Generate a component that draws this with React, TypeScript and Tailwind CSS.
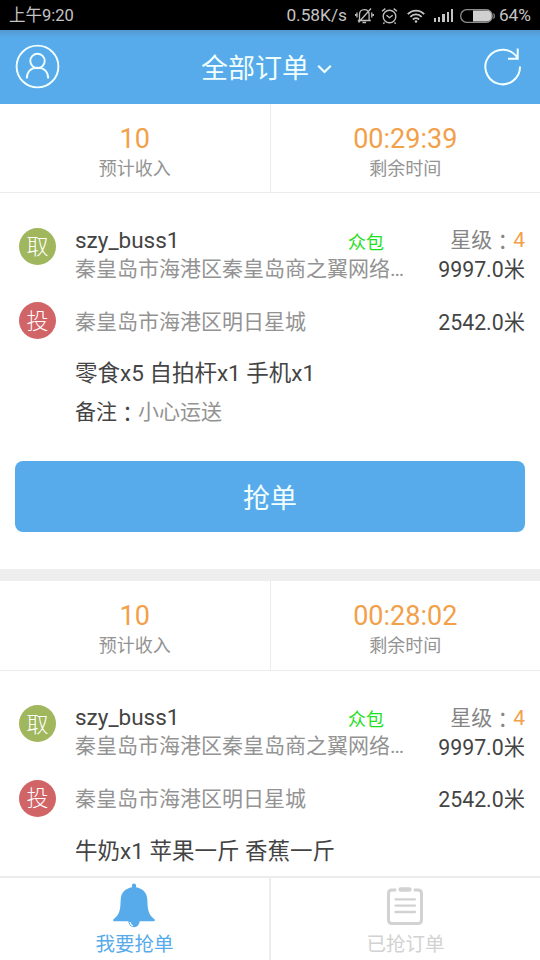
import React from 'react'
import clsx from 'clsx'

type Order = {
    id: number
    income: string
    timeLeft: string
    shop: string
    star: number
    from: string
    fromDistance: string
    to: string
    toDistance: string
    goods: string
    remark?: string
}

const orders: Order[] = [
    {
        id: 1,
        income: '10',
        timeLeft: '00:29:39',
        shop: 'szy_buss1',
        star: 4,
        from: '秦皇岛市海港区秦皇岛商之翼网络…',
        fromDistance: '9997.0米',
        to: '秦皇岛市海港区明日星城',
        toDistance: '2542.0米',
        goods: '零食x5 自拍杆x1 手机x1',
        remark: '小心运送',
    },
    {
        id: 2,
        income: '10',
        timeLeft: '00:28:02',
        shop: 'szy_buss1',
        star: 4,
        from: '秦皇岛市海港区秦皇岛商之翼网络…',
        fromDistance: '9997.0米',
        to: '秦皇岛市海港区明日星城',
        toDistance: '2542.0米',
        goods: '牛奶x1 苹果一斤 香蕉一斤',
    },
]

// full-width colon, centred in its cell
const Colon: React.FC = () => <span className="relative top-[2px] font-['Noto_Sans_CJK_TC',sans-serif]" lang="zh-TW">：</span>

const StatusBar: React.FC = () => (
    <div className="flex h-[30px] shrink-0 items-center bg-black pl-[9px] pr-[9px] pt-px text-[16.5px] leading-[29px] text-[#c4c4c4]">
        <span>上午9:20</span>
        <span className="ml-auto text-[17.3px]">0.58K/s</span>
        <svg className="ml-[8px] shrink-0" width="19" height="18" viewBox="0 0 19 18" fill="none" stroke="#bdbdbd" strokeWidth="1.3">
            <path d="M4.5 13.2V7.5C4.5 4.5 6.3 2.6 9.2 2.6s4.9 1.9 4.9 4.9v5.7M2.8 13.5h13M7.5 15.5h3.6M16 1.5 3.5 15.5M2 5.5v5M.6 7v2M16.8 5.5v5M18.3 7v2" />
        </svg>
        <svg className="ml-[7px] shrink-0" width="17" height="18" viewBox="0 0 17 18" fill="none" stroke="#bdbdbd" strokeWidth="1.4">
            <circle cx="8.5" cy="9.5" r="6.3" />
            <path d="M5.5 8.2 8.5 10.7 11.7 8.2M1 4.3 4.3 1.6M12.7 1.6 16 4.3M3.5 15.5 2.3 16.8M13.5 15.5l1.2 1.3" />
        </svg>
        <svg className="ml-[9px] shrink-0" width="18" height="14" viewBox="0 0 18 14" fill="none" stroke="#c4c4c4" strokeWidth="1.8">
            <path d="M.8 5.2C5.3.3 12.7.3 17.2 5.2M3.3 7.9c3.1-3.3 8.3-3.3 11.4 0M5.9 10.5c1.7-1.7 4.5-1.7 6.2 0" />
            <circle cx="9" cy="12.5" r="1.3" fill="#c4c4c4" stroke="none" />
        </svg>
        <div className="ml-[9px] flex h-[13px] items-end gap-[2px]">
            <i className="h-[4px] w-[2.2px] bg-[#c4c4c4]" />
            <i className="h-[5px] w-[2.2px] bg-[#c4c4c4]" />
            <i className="h-[8px] w-[2.2px] bg-[#c4c4c4]" />
            <i className="h-[10px] w-[2.2px] bg-[#c4c4c4]" />
            <i className="h-[13px] w-[2.2px] bg-[#c4c4c4]" />
        </div>
        <svg className="ml-[7px] mr-[1px] shrink-0" width="35" height="14" viewBox="0 0 35 14">
            <rect x=".7" y=".7" width="31.5" height="12.6" rx="6" fill="none" stroke="#8c8c8c" strokeWidth="1.3" />
            <path d="M13 1.6h13.5c3 0 5.2 2 5.2 5.4s-2.2 5.4-5.2 5.4H13z" fill="#d0d0d0" />
            <path d="M33.5 4.5c1 1.5 1 3.5 0 5" stroke="#8c8c8c" strokeWidth="1.3" fill="none" />
        </svg>
        <span className="ml-[3px] text-[17.3px]">64%</span>
    </div>
)

const Header: React.FC = () => (
    <header className="flex h-[73.5px] shrink-0 items-center justify-between bg-[#57abea] bg-[linear-gradient(#5499d0,#57abea_8px)] pl-[15px] pr-[17px] text-[#f2ffff]">
        <svg width="45" height="45" viewBox="0 0 45 45" fill="none" stroke="currentColor" strokeWidth="1.9">
            <circle cx="22.5" cy="22.5" r="20.9" />
            <circle cx="22.5" cy="17" r="7.2" />
            <path d="M11.8 34.5c0-6.5 4-10.8 10.7-10.8s10.7 4.3 10.7 10.8" />
        </svg>
        <button className="mr-[10px] mt-[4px] flex items-center text-[27px] leading-[36px]">
            全部订单
            <svg className="ml-[8px] mt-[2px]" width="15" height="11" viewBox="0 0 15 11" fill="none" stroke="currentColor" strokeWidth="2.2">
                <path d="M1.2 1.8 7.5 8 13.8 1.8" />
            </svg>
        </button>
        <svg width="40" height="40" viewBox="0 0 40 40" fill="none" stroke="currentColor" strokeWidth="2">
            <path d="M37 19.5A17.3 17.3 0 1 1 34.5 11M34.7 1.5v10.2H25" />
        </svg>
    </header>
)

const Stat: React.FC<{ value: string; label: string; first?: boolean }> = ({ value, label, first }) => (
    <div className={clsx('flex flex-1 flex-col items-center pt-[19px]', first && 'border-r border-[#ececec]')}>
        <span className="text-[27px] leading-[32px] text-[#f2a049]">{value}</span>
        <span className="mt-[1px] text-[18px] leading-[26px] text-[#939393]">{label}</span>
    </div>
)

const Badge: React.FC<{ text: string; className: string }> = ({ text, className }) => (
    <span className={clsx('flex size-[37px] shrink-0 items-center justify-center rounded-full pt-[2px] text-[22px] leading-none font-light text-white', className)}>
        {text}
    </span>
)

const OrderCard: React.FC<{ order: Order }> = ({ order }) => (
    <section className="flex h-[465.5px] shrink-0 flex-col bg-white text-[21px] leading-[29px] text-[#444]">
        <div className="flex h-[89.5px] shrink-0 border-b border-[#ececec]">
            <Stat value={order.income} label="预计收入" first />
            <Stat value={order.timeLeft} label="剩余时间" />
        </div>
        <div className="flex pl-[19px] pr-[15px] pt-[32px]">
            <Badge text="取" className="mt-[2.5px] bg-[#a0b75d]" />
            <div className="ml-[19px] w-[330px] pt-[0.5px]">
                <div className="flex items-center justify-between pr-[21px]">
                    <span className="text-[22.5px]">{order.shop}</span>
                    <span className="mt-[5px] text-[18px] leading-[24px] text-[#1ee01e]">众包</span>
                </div>
                <p className="whitespace-nowrap text-[#939393]">{order.from}</p>
            </div>
            <div className="ml-auto text-right">
                <p className="-mt-px text-[#858585]">星级<Colon /><span className="text-[#f2a049]">{order.star}</span></p>
                <p className="text-[21.3px]">{order.fromDistance}</p>
            </div>
        </div>
        <div className="mt-[18px] flex items-center pl-[19px] pr-[15px]">
            <Badge text="投" className="bg-[#d16466]" />
            <p className="ml-[19px] mt-[3px] text-[#939393]">{order.to}</p>
            <p className="ml-auto mt-[3px] text-[21.3px]">{order.toDistance}</p>
        </div>
        <div className="pl-[75px]">
            <p className="mt-[20px] text-[22.5px]">{order.goods}</p>
            {order.remark && (
                <p className="mt-[8px]">备注<Colon /><span className="text-[#939393]">{order.remark}</span></p>
            )}
        </div>
        <button className="mx-[15px] mb-[37px] mt-auto flex h-[71.5px] shrink-0 items-center justify-center rounded-[8px] bg-[#57abea] pt-[7px] text-[27px] text-[#f2ffff]">
            抢单
        </button>
    </section>
)

const TabBar: React.FC = () => (
    <nav className="flex h-[84px] shrink-0 border-t-2 border-[#ececec] bg-white text-[19.5px] leading-[26px]">
        <button className="flex flex-1 flex-col items-center border-r-2 border-[#ececec] pt-[5px] text-[#57abea]">
            <svg className="mr-[2px] shrink-0" width="42" height="46" viewBox="0 0 42 46">
                <path d="M21 .5c1.3 0 2 .9 2 2v1.7c6.500 1.200 10.900 5.300 11.200 11.300l.5 8c.5 5.500 2.300 9.500 6.500 12.500 1.100 1 .7 2.200-.7 2.200H1.500c-1.400 0-1.800-1.200-.7-2.200 4.200-3 6-7 6.500-12.500l.5-8C8.100 9.500 12.500 5.400 19 4.200V2.500c0-1.100.7-2 2-2z" fill="#57abea" />
                <path d="M15.300 38h11.400a5.700 6.200 0 0 1-11.400 0z" fill="#57abea" />
                <path d="M17 39c.3 2.200 1.300 3.400 3 4" fill="none" stroke="#fff" strokeWidth="1.2" />
            </svg>
            <span className="mt-[3px]">我要抢单</span>
        </button>
        <button className="flex flex-1 flex-col items-center pt-[8px] text-[#d2d2d2]">
            <svg className="mr-[2px] shrink-0" width="38" height="40" viewBox="0 0 38 40" fill="none" stroke="#d2d2d2">
                <path d="M10.2 4H6Q2.5 4 2.5 7.5V34Q2.5 37.5 6 37.5h26q3.5 0 3.5-3.5V7.5Q35.5 4 32 4h-4.2" strokeWidth="3" />
                <path d="M14.7 3.5h8.6" strokeWidth="4.6" strokeLinecap="round" />
                <path d="M9.5 13.3H29M9.5 19.6H29M9.5 26H29" strokeWidth="2.3" strokeLinecap="round" />
            </svg>
            <span className="mt-[6px]">已抢订单</span>
        </button>
    </nav>
)

const App: React.FC = () => {
    return (
        <div className="flex h-[960px] w-[540px] flex-col overflow-hidden bg-[#eee] font-[Roboto,'Noto_Sans_CJK_SC',sans-serif]" lang="zh-CN">
            <StatusBar />
            <Header />
            <main className="flex min-h-0 flex-1 flex-col gap-[12px] overflow-hidden">
                {orders.map((order) => (
                    <OrderCard key={order.id} order={order} />
                ))}
            </main>
            <TabBar />
        </div>
    )
}

export default App
